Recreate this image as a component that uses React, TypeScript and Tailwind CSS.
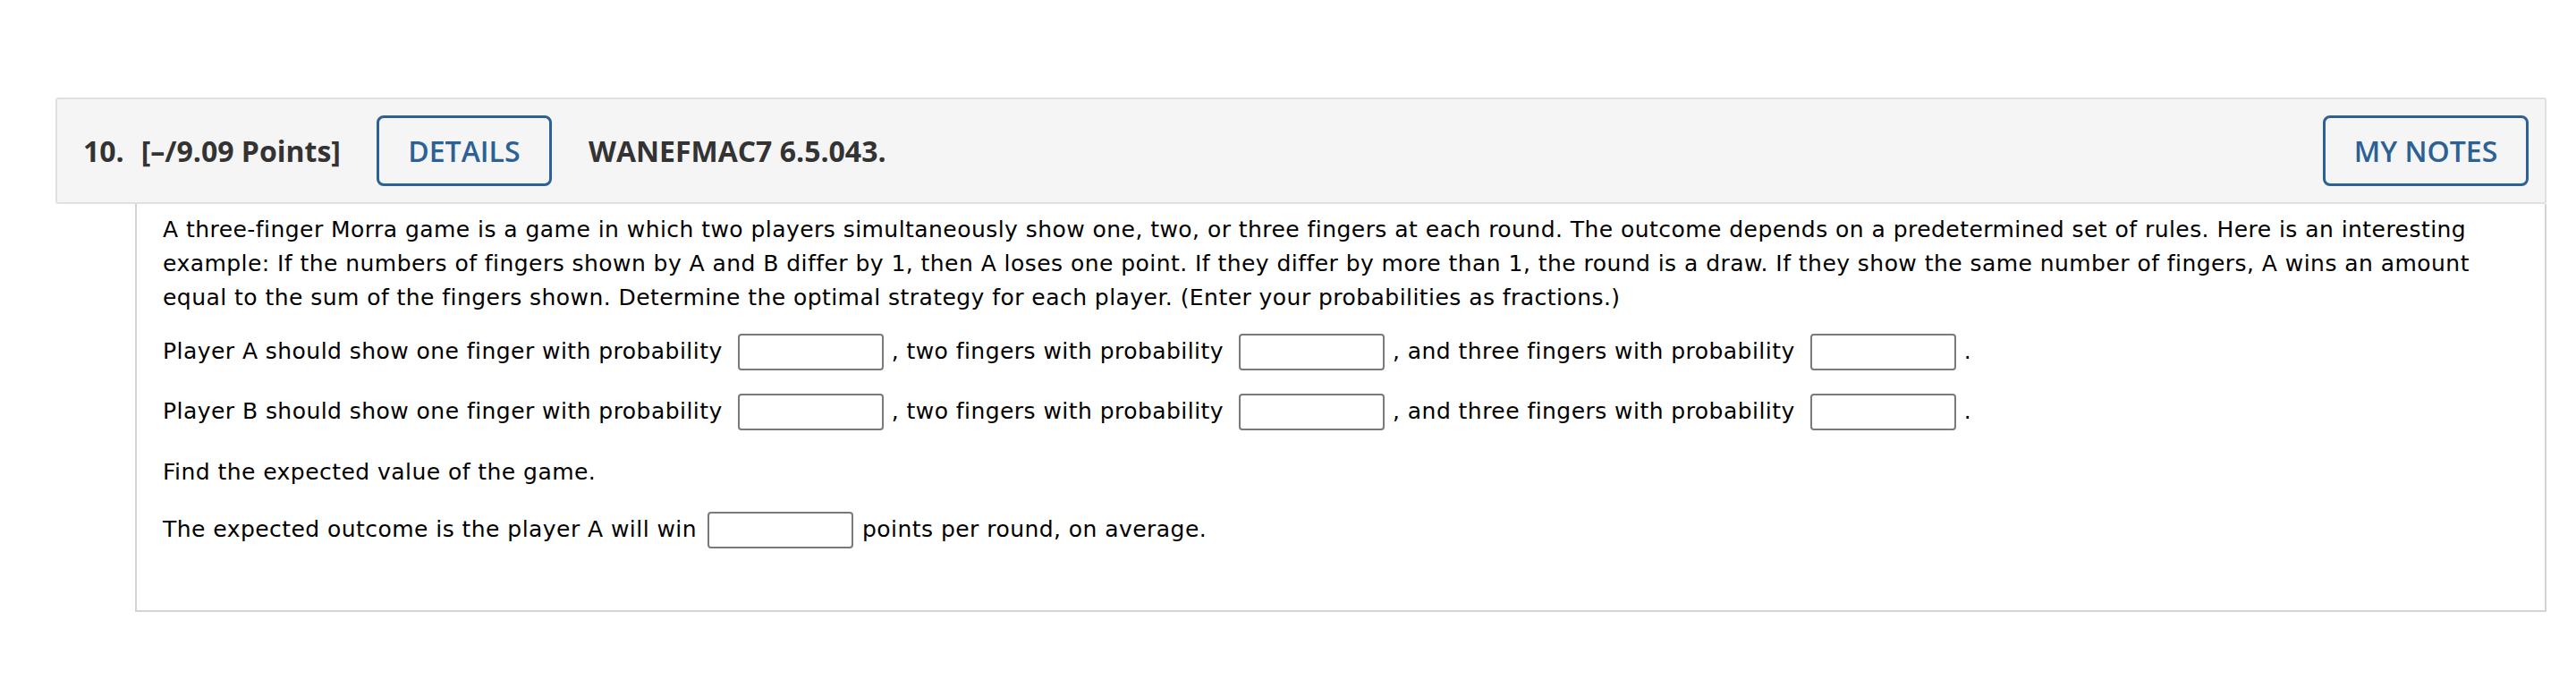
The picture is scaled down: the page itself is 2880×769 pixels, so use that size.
const body = "font-['Verdana','DejaVu_Sans',sans-serif]";

function Blank({ className = "ml-[17px] mr-[9px]" }: { className?: string }) {
  return (
    <input
      type="text"
      className={`h-[41px] w-[163px] shrink-0 rounded-[4px] border-2 border-[#7a7a7a] bg-white ${className}`}
    />
  );
}

export default function App() {
  return (
    <main className="min-h-screen bg-white pt-[109px] pl-[62px] pr-[33px]">
      <header className="flex h-[119px] items-center rounded-[3px] border-2 border-[#e0e0e0] bg-[#f5f5f5] pl-[29px] pr-[18px] font-['Open_Sans',sans-serif] text-[32px] text-[#333]">
        <span className="font-bold">10.</span>
        <span className="ml-[19px] font-bold">[–/9.09 Points]</span>
        <button className="ml-[40px] h-[79px] w-[196px] rounded-[8px] border-[3px] border-[#2b6194] font-semibold text-[#2b6194]">
          DETAILS
        </button>
        <span className="ml-[41px] font-bold">WANEFMAC7 6.5.043.</span>
        <button className="ml-auto h-[79px] w-[230px] rounded-[8px] border-[3px] border-[#2b6194] font-semibold text-[#2b6194]">
          MY NOTES
        </button>
      </header>

      <section
        className={`ml-[89px] border-x-2 border-b-2 border-[#d4d4d4] pt-[10px] pb-[68px] pl-[29px] pr-[28px] text-[25px] tracking-[0.45px] text-black ${body}`}
      >
        <p className="leading-[38px]">
          A three-finger Morra game is a game in which two players simultaneously show one, two, or three fingers at each
          round. The outcome depends on a predetermined set of rules. Here is an interesting example: If the numbers of
          fingers shown by A and B differ by 1, then A loses one point. If they differ by more than 1, the round is a draw.
          If they show the same number of fingers, A wins an amount equal to the sum of the fingers shown. Determine the
          optimal strategy for each player. (Enter your probabilities as fractions.)
        </p>

        <div className="mt-[19px] flex h-[44px] items-center whitespace-pre">
          Player A should show one finger with probability
          <Blank />
          , two fingers with probability
          <Blank />
          , and three fingers with probability
          <Blank />
          .
        </div>

        <div className="mt-[23px] flex h-[44px] items-center whitespace-pre">
          Player B should show one finger with probability
          <Blank />
          , two fingers with probability
          <Blank />
          , and three fingers with probability
          <Blank />
          .
        </div>

        <p className="mt-[27px] leading-[38px]">Find the expected value of the game.</p>

        <div className="mt-[23px] flex h-[44px] items-center whitespace-pre">
          The expected outcome is the player A will win
          <Blank className="ml-[12px] mr-[10px]" />
          points per round, on average.
        </div>
      </section>
    </main>
  );
}
